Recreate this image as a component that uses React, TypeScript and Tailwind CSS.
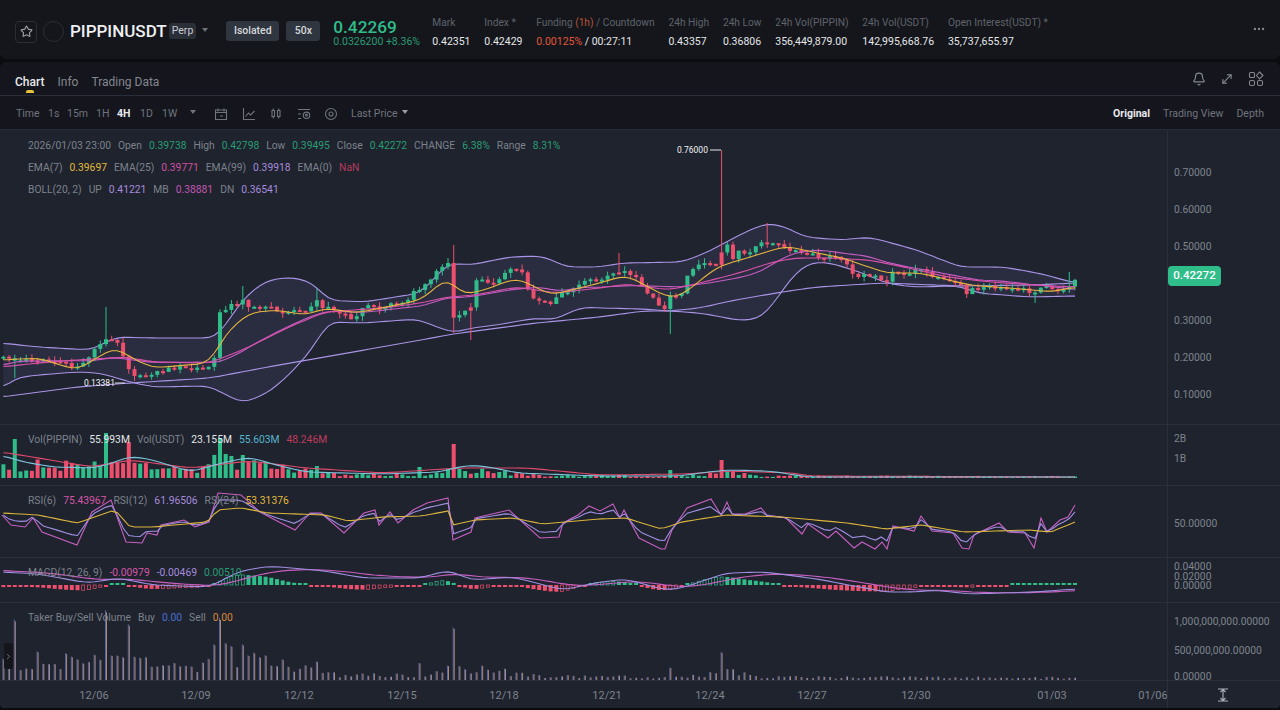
import type { ReactNode } from "react";
import { Bell, ChevronRight, Ellipsis, MoveDiagonal, Star } from "lucide-react";

type Pt = [number, number];

const rnd = (i: number) => {
  const s = Math.sin(i * 12.9898 + 7.233) * 43758.5453;
  return s - Math.floor(s);
};

const at = (pts: Pt[], x: number) => {
  if (x <= pts[0][0]) return pts[0][1];
  for (let i = 1; i < pts.length; i++) {
    if (x <= pts[i][0]) {
      const [x0, y0] = pts[i - 1];
      const [x1, y1] = pts[i];
      return y0 + ((y1 - y0) * (x - x0)) / (x1 - x0);
    }
  }
  return pts[pts.length - 1][1];
};

const line = (pts: Pt[]) => pts.map((p) => `${p[0].toFixed(1)},${p[1].toFixed(1)}`).join(" ");

const upper: Pt[] = [[2,343],[38,347],[92,350],[115,337],[153,338],[210,338],[218,337],[230,317],[249,293],[268,280],[291,277],[314,283],[327,300],[364,302],[421,293],[448,263],[471,265],[509,257],[543,256],[566,267],[600,267],[622,263],[682,262],[708,252],[743,233],[767,223],[786,227],[804,237],[843,240],[869,237],[917,250],[960,267],[1003,267],[1038,273],[1075,283]];
const lower: Pt[] = [[2,390],[15,378],[38,375],[77,372],[100,373],[130,382],[153,387],[210,386],[222,393],[243,403],[268,393],[291,373],[314,347],[327,322],[364,323],[417,319],[440,328],[453,333],[471,328],[497,325],[536,318],[555,320],[574,310],[586,307],[600,308],[643,309],[669,311],[700,313],[743,321],[763,317],[778,297],[795,273],[812,262],[830,263],[860,272],[886,283],[912,287],[960,286],[977,293],[1029,297],[1075,296]];
const ema99: Pt[] = [[2,397],[77,387],[130,383],[210,378],[268,367],[325,357],[421,340],[453,334],[536,323],[600,317],[643,311],[669,311],[700,308],[730,301],[782,292],[817,287],[882,283],[960,286],[1034,285],[1075,283]];
const ema25: Pt[] = [[2,367],[38,363],[77,360],[126,357],[153,362],[210,363],[249,347],[287,328],[325,312],[383,308],[421,303],[448,297],[475,295],[517,287],[555,293],[600,288],[626,284],[669,290],[700,283],[739,273],[773,262],[795,258],[830,258],[869,260],[904,267],[947,277],[990,282],[1034,285],[1075,287]];
const ema7: Pt[] = [[2,360],[38,358],[77,370],[115,347],[130,357],[153,368],[210,363],[226,333],[249,313],[276,310],[306,315],[325,308],[356,313],[421,300],[448,277],[459,293],[475,293],[517,278],[551,295],[600,283],[626,275],[669,298],[682,295],[717,267],[773,250],[786,246],[817,253],[843,258],[886,273],[921,273],[969,285],[1034,290],[1051,292],[1075,287]];
const closePath: Pt[] = [[2,358],[38,360],[60,362],[77,367],[83,365],[92,352],[105,341],[115,337],[120,345],[127,368],[135,375],[145,377],[155,372],[175,368],[195,368],[210,367],[215,357],[219,313],[241,302],[264,307],[306,315],[318,302],[327,307],[344,317],[356,315],[364,305],[383,307],[409,297],[430,277],[448,263],[453,318],[463,312],[471,307],[476,280],[494,283],[509,267],[520,268],[530,297],[551,303],[562,293],[578,287],[589,277],[600,280],[617,270],[635,277],[648,293],[665,310],[669,297],[680,297],[687,275],[704,262],[715,268],[726,242],[732,258],[739,252],[750,252],[763,242],[773,243],[784,247],[795,252],[808,253],[825,258],[836,258],[851,267],[854,277],[873,275],[886,283],[891,272],[904,273],[921,270],[934,278],[960,283],[966,295],[973,289],[990,287],[1016,287],[1034,293],[1042,286],[1057,292],[1066,287],[1073,285],[1076,275]];
const volCyan: Pt[] = [[2,455],[23,462],[54,467],[96,468],[115,462],[130,456],[153,460],[191,472],[214,465],[249,457],[276,465],[306,472],[383,474],[440,472],[467,465],[490,467],[517,473],[600,476],[680,476],[700,473],[726,470],[770,471],[795,475],[808,477],[1075,477]];
const volPink: Pt[] = [[2,452],[38,458],[92,467],[130,460],[191,468],[249,461],[306,468],[383,473],[459,468],[528,468],[600,475],[687,474],[726,471],[795,473],[808,476],[1075,477]];
const rsi24: Pt[] = [[2,513],[38,515],[77,523],[115,510],[130,527],[153,527],[207,522],[218,510],[241,508],[268,513],[325,515],[348,521],[383,517],[421,516],[448,511],[453,525],[475,520],[513,518],[543,524],[600,519],[626,518],[661,529],[682,522],[726,515],[782,517],[847,523],[886,529],[921,525],[964,532],[1029,530],[1051,532],[1075,522]];
const rsi6: Pt[] = [[2,515],[11,525],[25,527],[33,518],[42,532],[77,545],[92,512],[111,500],[126,542],[142,543],[147,533],[157,535],[161,525],[184,520],[195,527],[209,522],[218,493],[241,495],[260,512],[279,522],[295,530],[310,513],[321,513],[344,533],[364,513],[375,510],[379,525],[390,512],[398,523],[413,510],[427,503],[448,498],[453,540],[471,532],[475,518],[509,510],[540,538],[559,537],[563,523],[578,515],[589,506],[600,511],[613,504],[620,518],[624,510],[639,538],[661,549],[665,549],[672,530],[687,508],[711,499],[721,515],[727,502],[732,514],[745,514],[761,508],[767,515],[786,518],[802,534],[808,524],[828,538],[836,531],[854,548],[862,542],[875,549],[882,542],[887,549],[893,526],[914,531],[921,516],[932,531],[953,533],[962,548],[969,549],[974,535],[999,523],[1008,532],[1025,533],[1034,548],[1041,518],[1047,532],[1060,520],[1068,517],[1075,505]];
const macdDif: Pt[] = [[2,572],[38,574],[88,583],[119,578],[153,585],[210,587],[237,572],[268,566],[325,571],[364,578],[421,578],[448,570],[471,580],[513,577],[563,590],[600,582],[626,579],[665,590],[682,588],[726,573],[765,572],[817,579],[886,592],[917,592],[934,590],[969,594],[1034,592],[1075,589]];
const volEnvelope: Pt[] = [[0,15],[60,13],[130,12],[200,9],[215,18],[260,15],[300,8],[330,4],[420,3],[440,7],[500,7],[530,3],[660,2],[700,3],[730,6],[760,2],[1075,1.5]];

const count = 189;
const xs = Array.from({ length: count }, (_, i) => 1075 - 5.7 * (count - 1 - i));
const closes = xs.map((x, i) => at(closePath, x) + (x > 220 && x < 450 ? (rnd(i) - 0.5) * 7 : (rnd(i) - 0.5) * 4));

const wickTops: Pt[] = [[105,307],[241,286],[316,289],[453,245],[618,253],[721,150],[767,223],[1069,272],[690,283]];
const wickBottoms: Pt[] = [[13,378],[470,340],[669,334],[453,333],[1035,303],[966,298]];
const volOverrides: Pt[] = [[13,39],[105,45],[127,36],[218,40],[224,24],[241,23],[453,34],[721,18],[418,11],[669,8],[315,12]];
const forcedUp: Pt[] = [[13,1],[470,0],[618,0],[721,0],[105,1],[669,1],[241,1]];
const nearest = (list: Pt[], x: number) => list.find((p) => Math.abs(p[0] - x) <= 2.85);

const candles = xs.map((x, i) => {
  const close = closes[i];
  const open = i === 0 ? close + 2 : closes[i - 1];
  const forced = nearest(forcedUp, x);
  const up = forced ? forced[1] === 1 : close < open;
  const top = Math.min(open, close);
  const bottom = Math.max(open, close);
  const t = nearest(wickTops, x);
  const b = nearest(wickBottoms, x);
  const vo = nearest(volOverrides, x);
  const vol = vo ? vo[1] : at(volEnvelope, x) * (0.45 + rnd(i + 50) * 0.9);
  return {
    x,
    up,
    top,
    height: Math.max(bottom - top, 2),
    wickTop: t ? t[1] : top - rnd(i + 200) * 5,
    wickBottom: b ? b[1] : bottom + rnd(i + 300) * 5,
    vol,
  };
});

const GREEN = "#2fbd8a";
const RED = "#ee4f6d";
const sampled = (pts: Pt[]) => xs.map((x) => [x, at(pts, x)] as Pt);

// rounds off the corners of the hand-read band lines
const smooth = (pts: Pt[]) => {
  const pass = (list: Pt[]) =>
    list.map((p, i) => {
      const a = list[Math.max(i - 1, 0)];
      const b = list[Math.min(i + 1, list.length - 1)];
      return [p[0], (a[1] + p[1] + b[1]) / 3] as Pt;
    });
  return pass(pass(pts));
};

const upperLine = smooth(sampled(upper));
const lowerLine = smooth(sampled(lower));
const midBand = upperLine.map(([x, y], i) => [x, (y + lowerLine[i][1]) / 2] as Pt);
const rsi12 = xs.map((x) => [x, at(rsi24, x) + 0.6 * (at(rsi6, x) - at(rsi24, x))] as Pt);
const difLine = smooth(sampled(macdDif));
const deaLine: Pt[] = [];
difLine.forEach(([x, y], i) => {
  const prev = i === 0 ? y - 2 : deaLine[i - 1][1];
  deaLine.push([x, prev + (y - prev) * 0.16]);
});
const hist = difLine.map(([x, y], i) => ({ x, v: (deaLine[i][1] - y) * 1.25 }));
const band = `M${line(upperLine)} L${line([...lowerLine].reverse())} Z`;

function Pane({ height, axis, children, legend }: { height: string; axis: ReactNode; children: ReactNode; legend?: ReactNode }) {
  return (
    <div className={`flex border-b border-[#2a2f3a] ${height}`}>
      <div className="relative w-[1167px] overflow-hidden">
        {children}
        {legend}
      </div>
      <div className="relative flex-1 border-l border-[#2a2f3a]">{axis}</div>
    </div>
  );
}

function Axis({ labels }: { labels: [string, number][] }) {
  return (
    <>
      {labels.map(([text, top]) => (
        <span key={text} className="absolute left-[6px] -translate-y-1/2 leading-[9px] text-[#7f848d]" style={{ top }}>
          {text}
        </span>
      ))}
    </>
  );
}

function Stat({ label, children }: { label: ReactNode; children: ReactNode }) {
  return (
    <div className="flex flex-col gap-[6px] whitespace-nowrap">
      <span className="text-[10.2px] leading-[13px] text-[#5e636c]">{label}</span>
      <span className="leading-[13px] text-[#e4e6ea]">{children}</span>
    </div>
  );
}

const Caret = ({ className }: { className: string }) => (
  <span className={`h-0 w-0 border-x-[3.5px] border-t-[4px] border-x-transparent ${className}`} />
);

function L({ k, v, c }: { k: string; v: string; c: string }) {
  return (
    <span className="flex gap-[7px]">
      <span className="text-[#7d828c]">{k}</span>
      <span style={{ color: c }}>{v}</span>
    </span>
  );
}

function ToolIcon({ d }: { d: string }) {
  return (
    <svg width="14" height="14" viewBox="0 0 14 14" fill="none" stroke="#6f747d" strokeWidth="1.1">
      <path d={d} />
    </svg>
  );
}

const dates: [string, number][] = [["12/06",94],["12/09",196],["12/12",299],["12/15",402],["12/18",504],["12/21",607],["12/24",710],["12/27",812],["12/30",916],["01/03",1052],["01/06",1153]];

export default function App() {
  return (
    <div className="flex h-[710px] w-[1280px] flex-col overflow-hidden bg-[#0b0c0f] pb-[2px] text-[10.5px] font-['Roboto',sans-serif] text-[#7d828c]">
      <header className="flex h-[59px] shrink-0 items-center rounded-b-[6px] bg-[#15161b] pl-[15px] pr-[14px] pt-[4px]">
        <div className="flex h-[22px] w-[22px] items-center justify-center rounded-[4px] border border-[#2b2e36]">
          <Star size={13} className="text-[#a0a4ab]" />
        </div>
        <div className="ml-[6px] h-[21px] w-[21px] rounded-full border border-[#2b2e36]" />
        <span className="ml-[6px] text-[17px] font-medium leading-none text-[#eef0f2]">PIPPINUSDT</span>
        <span className="mb-[2px] ml-[2px] rounded-[3px] bg-[#2a2e37] px-[3px] py-[2px] text-[10.5px] leading-[12px] text-[#c8cbd0]">Perp</span>
        <Caret className="mb-[4px] ml-[6px] border-t-[#6d727b]" />
        <span className="ml-[18px] mb-[2px] flex h-[20px] w-[53px] items-center justify-center rounded-[3px] bg-[#30363f] font-medium text-[#d5d8dc]">Isolated</span>
        <span className="ml-[7px] mb-[2px] flex h-[20px] w-[34px] items-center justify-center rounded-[3px] bg-[#30363f] font-medium text-[#d5d8dc]">50x</span>
        <div className="ml-[13px] flex w-[99px] flex-col whitespace-nowrap pt-[7px]">
          <span className="text-[17.2px] font-medium leading-[14px] text-[#2fbd8a]">0.42269</span>
          <span className="leading-[16px] text-[#2a9d75]">0.0326200 +8.36%</span>
        </div>
        <div className="flex gap-[13.8px]">
          <Stat label="Mark">0.42351</Stat>
          <Stat label="Index *">0.42429</Stat>
          <Stat label={<>Funding <span className="text-[#b5553a]">(1h)</span> / Countdown</>}>
            <span className="text-[#e2583c]">0.00125%</span> / 00:27:11
          </Stat>
          <Stat label="24h High">0.43357</Stat>
          <Stat label="24h Low">0.36806</Stat>
          <Stat label="24h Vol(PIPPIN)">356,449,879.00</Stat>
          <Stat label="24h Vol(USDT)">142,995,668.76</Stat>
          <Stat label="Open Interest(USDT) *">35,737,655.97</Stat>
        </div>
        <Ellipsis size={14} className="mb-[5px] ml-auto text-[#8a8e96]" />
      </header>

      <main className="mt-[3px] flex min-h-0 flex-1 flex-col overflow-hidden rounded-t-[6px] rounded-b-[4px] bg-[#15161d]">
        <div className="flex h-[34px] shrink-0 items-center gap-[13px] border-b border-[#2c2f3b] pl-[15px] pr-[16px] pt-[7px] text-[12px]">
          <span className="relative font-medium text-[#e8eaed]">
            Chart
            <span className="absolute left-[11px] top-[17px] h-[3px] w-[8px] rounded-t-[2px] bg-[#e8c23a]" />
          </span>
          <span className="text-[#83878f]">Info</span>
          <span className="text-[#83878f]">Trading Data</span>
          <div className="mb-[7px] ml-auto flex items-center gap-[14px] text-[#83878f]">
            <Bell size={14} />
            <MoveDiagonal size={14} />
            <svg width="16" height="16" viewBox="0 0 16 16" fill="none" stroke="currentColor" strokeWidth="1.1">
              <rect x="1.5" y="1.5" width="5" height="5" rx="1" />
              <path d="M11.5 1 15 4.5 11.5 8 8.5 4.5Z" />
              <rect x="1.5" y="9.5" width="5" height="5" rx="1.5" />
              <rect x="9.5" y="9.5" width="5" height="5" rx="1.5" />
            </svg>
          </div>
        </div>

        <div className="flex h-[34px] shrink-0 items-center border-b border-[#262a35] pl-[16px] pr-[16px] pt-[2px] text-[#6f747d]">
          <span className="w-[32px]">Time</span>
          <span className="w-[19px]">1s</span>
          <span className="w-[29px]">15m</span>
          <span className="w-[21px]">1H</span>
          <span className="w-[23px] font-bold text-[#e8eaed]">4H</span>
          <span className="w-[22px]">1D</span>
          <span className="w-[28px]">1W</span>
          <Caret className="mb-[3px] border-t-[#6f747d]" />
          <div className="ml-[18px] flex items-center gap-[13.5px]">
            <ToolIcon d="M1.5 3h11v9.5h-11zM1.5 5.5h11M4 1.5v3M10 1.5v3M6 9h3" />
            <ToolIcon d="M1.5 1v11.5h11.5M3.5 9.5l3-3.5 2 2 4-4" />
            <ToolIcon d="M3 3.5h2.5v6H3zM8.5 3.5H11v6H8.5zM4.2 1.5v2M4.2 9.5v2M9.7 1.5v2M9.7 9.5v2" />
            <ToolIcon d="M1 2.5h12M1 7h3M1 11.5h3M9.5 11.5a3.2 3.2 0 1 0 0-6.4 3.2 3.2 0 0 0 0 6.4zM9.5 9.2a.9.9 0 1 0 0-1.8.9.9 0 0 0 0 1.8z" />
            <ToolIcon d="M7 12.5a5.5 5.5 0 1 0 0-11 5.5 5.5 0 0 0 0 11zM7 9a2 2 0 1 0 0-4 2 2 0 0 0 0 4z" />
          </div>
          <span className="ml-[13px]">Last Price</span>
          <Caret className="mb-[3px] ml-[4px] border-t-[#9a9ea6]" />
          <span className="ml-auto font-bold text-[#e8eaed]">Original</span>
          <span className="ml-[13px]">Trading View</span>
          <span className="ml-[13px]">Depth</span>
        </div>

        <section className="flex min-h-0 flex-1 flex-col bg-[#1e232e] text-[10.3px]">
          <Pane
            height="h-[295px]"
            legend={
              <div className="absolute left-[28px] top-[9px] flex flex-col gap-[9px] leading-[13px]">
                <div className="flex gap-[7px]">
                  <span className="text-[#7d828c]">2026/01/03 23:00</span>
                  <L k="Open" v="0.39738" c="#2a9d75" />
                  <L k="High" v="0.42798" c="#2a9d75" />
                  <L k="Low" v="0.39495" c="#2a9d75" />
                  <L k="Close" v="0.42272" c="#2a9d75" />
                  <L k="CHANGE" v="6.38%" c="#2a9d75" />
                  <L k="Range" v="8.31%" c="#2a9d75" />
                </div>
                <div className="flex gap-[7px]">
                  <L k="EMA(7)" v="0.39697" c="#e2b93b" />
                  <L k="EMA(25)" v="0.39771" c="#d0509f" />
                  <L k="EMA(99)" v="0.39918" c="#a78bdc" />
                  <L k="EMA(0)" v="NaN" c="#b83b5e" />
                </div>
                <div className="flex gap-[7px]">
                  <span className="text-[#7d828c]">BOLL(20, 2)</span>
                  <L k="UP" v="0.41221" c="#a78bdc" />
                  <L k="MB" v="0.38881" c="#c456b0" />
                  <L k="DN" v="0.36541" c="#a78bdc" />
                </div>
              </div>
            }
            axis={
              <>
                <Axis labels={[["0.70000",42],["0.60000",79],["0.50000",116],["0.30000",190],["0.20000",227],["0.10000",264]]} />
                <span className="absolute left-0 top-[136px] flex h-[20px] w-[53px] items-center justify-center rounded-[4px] bg-[#2fbd8a] text-[11.5px] font-medium text-white">0.42272</span>
              </>
            }
          >
            <svg width="1167" height="294" viewBox="0 130 1167 294" className="block">
              <path d={band} fill="#9b86e0" fillOpacity="0.1" />
              <polyline points={line(upperLine)} fill="none" stroke="#a994e6" strokeWidth="1.1" />
              <polyline points={line(lowerLine)} fill="none" stroke="#a994e6" strokeWidth="1.1" />
              <polyline points={line(smooth(sampled(ema99)))} fill="none" stroke="#a994e6" strokeWidth="1.1" />
              {candles.map((c) => (
                <g key={c.x} fill={c.up ? GREEN : RED}>
                  <rect x={c.x - 0.5} y={c.wickTop} width="1" height={c.wickBottom - c.wickTop} />
                  <rect x={c.x - 2} y={c.top} width="4" height={c.height} />
                </g>
              ))}
              <polyline points={line(midBand)} fill="none" stroke="#c65cc4" strokeWidth="1.1" />
              <polyline points={line(smooth(sampled(ema25)))} fill="none" stroke="#d952a8" strokeWidth="1.1" />
              <polyline points={line(smooth(sampled(ema7)))} fill="none" stroke="#e6b53f" strokeWidth="1.1" />
              <g fill="#f0f1f3" fontSize="8.5" fontFamily="Roboto, sans-serif">
                <text x="677" y="153">0.76000</text>
                <text x="84" y="386">0.13381</text>
              </g>
              <path d="M710 150h11M115 383h10" stroke="#e4e6ea" strokeWidth="1" />
            </svg>
          </Pane>

          <Pane
            height="h-[61px]"
            legend={
              <div className="absolute left-[28px] top-[8px] flex gap-[7px] leading-[13px]">
                <L k="Vol(PIPPIN)" v="55.993M" c="#e4e6ea" />
                <L k="Vol(USDT)" v="23.155M" c="#e4e6ea" />
                <span className="text-[#58b4cc]">55.603M</span>
                <span className="text-[#c03c5c]">48.246M</span>
              </div>
            }
            axis={<Axis labels={[["2B",13],["1B",33]]} />}
          >
            <svg width="1167" height="60" viewBox="0 425 1167 60" className="block">
              {candles.map((c) => (
                <rect key={c.x} x={c.x - 2} y={478 - c.vol} width="4" height={c.vol} fill={c.up ? GREEN : RED} />
              ))}
              <polyline points={line(smooth(sampled(volPink)))} fill="none" stroke="#e04a6c" strokeWidth="1.1" />
              <polyline points={line(smooth(sampled(volCyan)))} fill="none" stroke="#7cc4dc" strokeWidth="1.1" />
            </svg>
          </Pane>

          <Pane
            height="h-[72px]"
            legend={
              <div className="absolute left-[28px] top-[8px] flex gap-[7px] leading-[13px]">
                <L k="RSI(6)" v="75.43967" c="#d656a8" />
                <L k="RSI(12)" v="61.96506" c="#a78bdc" />
                <L k="RSI(24)" v="53.31376" c="#e2b93b" />
              </div>
            }
            axis={<Axis labels={[["50.00000",37]]} />}
          >
            <svg width="1167" height="71" viewBox="0 486 1167 71" className="block">
              <polyline points={line(rsi6)} fill="none" stroke="#c85fc0" strokeWidth="1.1" />
              <polyline points={line(rsi12)} fill="none" stroke="#a08ee0" strokeWidth="1.1" />
              <polyline points={line(sampled(rsi24))} fill="none" stroke="#dcb43c" strokeWidth="1.1" />
            </svg>
          </Pane>

          <Pane
            height="h-[45px]"
            legend={
              <div className="absolute left-[28px] top-[8px] flex gap-[7px] leading-[13px]">
                <L k="MACD(12, 26, 9)" v="-0.00979" c="#d656a8" />
                <span className="text-[#a78bdc]">-0.00469</span>
                <span className="text-[#2a9d75]">0.00510</span>
              </div>
            }
            axis={<Axis labels={[["0.04000",8],["0.02000",17.5],["0.00000",27]]} />}
          >
            <svg width="1167" height="44" viewBox="0 558 1167 44" className="block">
              {hist.map((h, i) => {
                const color = h.v >= 0 ? GREEN : RED;
                const size = Math.max(Math.abs(h.v), 2);
                const hollow = i > 0 && Math.abs(h.v) < Math.abs(hist[i - 1].v) === h.v < 0 && Math.abs(h.v) > 2;
                return hollow ? (
                  <rect key={h.x} x={h.x - 1.5} y={h.v >= 0 ? 585 - size : 585} width="3" height={size} fill="none" stroke={color} strokeWidth="0.7" />
                ) : (
                  <rect key={h.x} x={h.x - 2} y={h.v >= 0 ? 585 - size : 585} width="4" height={size} fill={color} />
                );
              })}
              <polyline points={line(deaLine)} fill="none" stroke="#c85fc0" strokeWidth="1.1" />
              <polyline points={line(difLine)} fill="none" stroke="#a08ee0" strokeWidth="1.1" />
            </svg>
          </Pane>

          <Pane
            height="h-[78px]"
            legend={
              <>
                <div className="absolute left-[28px] top-[8px] flex gap-[7px] leading-[13px]">
                  <span className="text-[#7d828c]">Taker Buy/Sell Volume</span>
                  <L k="Buy" v="0.00" c="#4a6fd0" />
                  <L k="Sell" v="0.00" c="#d9893a" />
                </div>
                <div className="absolute left-[4px] top-[40px] flex h-[26px] w-[9px] items-center justify-center rounded-[2px] bg-[#14161b]">
                  <ChevronRight size={9} className="text-[#8a8e96]" />
                </div>
              </>
            }
            axis={<Axis labels={[["1,000,000,000.00000",18],["500,000,000.00000",47],["0.00000",72.5]]} />}
          >
            <svg width="1167" height="77" viewBox="0 603 1167 77" className="block">
              {candles.map((c) => {
                const h = c.vol * 1.55;
                return (
                  <g key={c.x}>
                    <rect x={c.x - 1} y={680 - h} width="1" height={h} fill="#56659f" />
                    <rect x={c.x} y={680 - h * 0.97} width="1" height={h * 0.97} fill="#a98a80" />
                  </g>
                );
              })}
            </svg>
          </Pane>

          <div className="flex min-h-0 flex-1">
            <div className="relative w-[1167px] overflow-hidden text-[11px] text-[#7f848d]">
              {dates.map(([d, x]) => (
                <span key={d} className="absolute top-[9px] -translate-x-1/2 leading-none" style={{ left: x }}>
                  {d}
                </span>
              ))}
            </div>
            <div className="flex flex-1 items-center justify-center border-l border-[#2a2f3a] pr-[2px]">
              <svg width="14" height="14" viewBox="0 0 14 14" fill="none" stroke="#aeb2b9" strokeWidth="1.1">
                <path d="M2 1h10M2 13h10M7 1.5v11M4.5 4 7 1.5 9.5 4M4.5 10 7 12.5 9.5 10" />
              </svg>
            </div>
          </div>
        </section>
      </main>
    </div>
  );
}
